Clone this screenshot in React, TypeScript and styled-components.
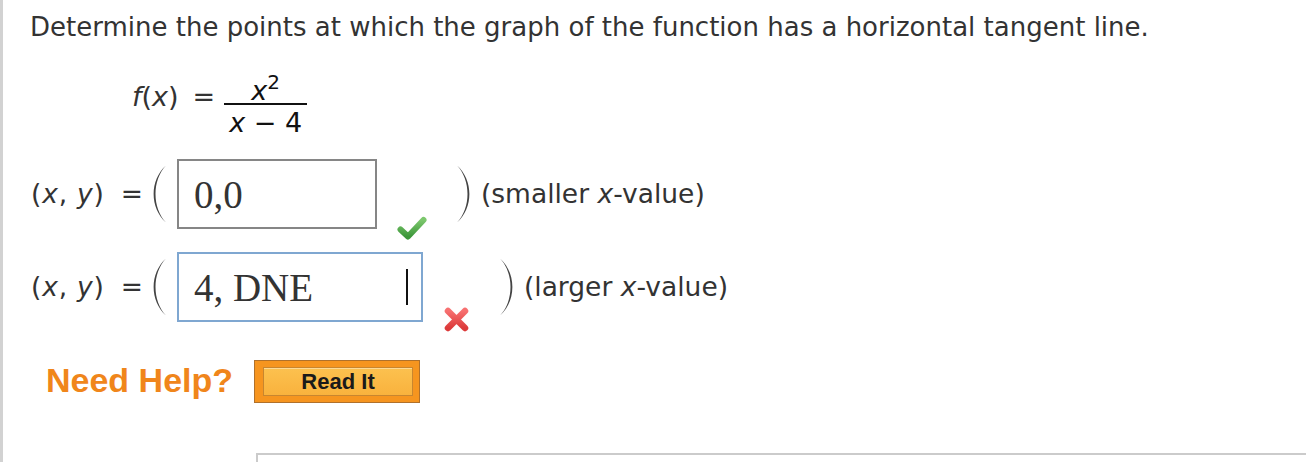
import React from 'react';
import styled, { createGlobalStyle } from 'styled-components';

const GlobalStyle = createGlobalStyle`
  html, body {
    margin: 0;
    padding: 0;
    background: #fff;
  }
  body {
    font-family: 'DejaVu Sans', Verdana, sans-serif;
    color: #333;
  }
`;

const Page = styled.div`
  min-height: 462px;
  box-sizing: border-box;
  border-left: 3px solid #d2d2d2;
  padding: 12px 0 0 27px;
  display: flex;
  flex-direction: column;
  overflow: hidden;
`;

const Prompt = styled.p`
  margin: 0;
  font-size: 26px;
  line-height: 30px;
  color: #333;
`;

const FunctionRow = styled.div`
  display: flex;
  align-items: flex-start;
  margin-top: 36px;
  padding-left: 102px;
  font-size: 27px;
  color: #333;
`;

const FuncName = styled.span`
  line-height: 30px;
  margin-top: 4px;
`;

const Equals = styled.span<{ $left: number; $right: number }>`
  margin: 0 ${p => p.$right}px 0 ${p => p.$left}px;
  line-height: 30px;
`;

const Fraction = styled.span`
  display: inline-flex;
  flex-direction: column;
  align-items: center;
  color: #111;
`;

const Numerator = styled.span`
  line-height: 25px;
  padding: 0 6px;
`;

const Sup = styled.sup`
  font-size: 20px;
  line-height: 0;
  vertical-align: 11px;
`;

const Bar = styled.span`
  align-self: stretch;
  height: 2px;
  background: #111;
`;

const Denominator = styled.span`
  line-height: 36px;
  padding: 0 5px;
`;

const AnswerRow = styled.div<{ $top: number }>`
  display: flex;
  align-items: center;
  margin-top: ${p => p.$top}px;
  font-size: 26.5px;
  color: #333;
`;

const PointLabel = styled.span`
  padding-left: 1px;
  line-height: 30px;
  letter-spacing: 0.8px;
`;

const Field = styled.div<{ $width: number; $focused?: boolean }>`
  box-sizing: border-box;
  width: ${p => p.$width}px;
  height: 70px;
  margin-left: 11px;
  display: flex;
  align-items: center;
  padding: 0 15px;
  border: 2px solid ${p => (p.$focused ? '#7fa7d1' : '#868686')};
  background: #fff;
  font-family: 'Liberation Serif', 'Times New Roman', serif;
  font-size: 39px;
  color: #333;
`;

const Caret = styled.span`
  margin-left: auto;
  margin-right: -2px;
  width: 2px;
  height: 36px;
  background: #111;
`;

const Status = styled.span`
  display: flex;
  align-self: flex-end;
  margin: 0 30px -11px 20px;
`;

const Hint = styled.span`
  margin-left: 10px;
  line-height: 30px;
`;

const HelpRow = styled.div`
  display: flex;
  align-items: center;
  gap: 21px;
  margin-top: 38px;
  padding-left: 16px;
`;

const HelpLabel = styled.span`
  margin-bottom: 3px;
  font-family: 'Liberation Sans', Arial, sans-serif;
  font-weight: bold;
  font-size: 34px;
  line-height: 38px;
  color: #f0861b;
`;

const ReadItButton = styled.button`
  box-sizing: border-box;
  width: 166px;
  height: 43px;
  padding: 6px 6px 6px 8px;
  border: 1px solid #b0712b;
  background: #f6951f;
  display: flex;
  cursor: pointer;
`;

const ReadItFace = styled.span`
  flex: 1;
  display: flex;
  align-items: center;
  justify-content: center;
  border: 1px solid #c8862f;
  background: linear-gradient(#fcc14f, #f9b23d);
  box-shadow: inset 0 1px 0 rgba(255, 255, 255, 0.4);
  font: bold 22px 'Liberation Sans', Arial, sans-serif;
  color: #1a1a1a;
`;

const NextPanel = styled.div`
  flex: 1;
  margin: 50px 0 0 226px;
  border-top: 2px solid #cbcbcb;
  border-left: 2px solid #cbcbcb;
`;

function Paren({ side, gap }: { side: 'left' | 'right'; gap: number }) {
  const d =
    side === 'left'
      ? 'M14 0.5 C-2.5 15 -2.5 43 14 57.5 C0 43 0 15 14 0.5 Z'
      : 'M0 0.5 C16.5 15 16.5 43 0 57.5 C14 43 14 15 0 0.5 Z';
  return (
    <svg width="14" height="58" viewBox="0 0 14 58" style={{ marginLeft: gap, flexShrink: 0 }}>
      <path d={d} fill="#444" />
    </svg>
  );
}

function CheckIcon() {
  return (
    <svg width="30" height="24" viewBox="0 0 30 24">
      <defs>
        <linearGradient id="okGrad" x1="0" y1="0" x2="0" y2="1">
          <stop offset="0" stopColor="#7cc76d" />
          <stop offset="1" stopColor="#3d973a" />
        </linearGradient>
      </defs>
      <path
        d="M3.5 13.5 L11 20.5 L26.5 4"
        fill="none"
        stroke="url(#okGrad)"
        strokeWidth="6"
        strokeLinecap="round"
        strokeLinejoin="round"
      />
    </svg>
  );
}

function CrossIcon() {
  return (
    <svg width="27" height="27" viewBox="0 0 27 27">
      <defs>
        <linearGradient id="badGrad" x1="0" y1="0" x2="0" y2="1">
          <stop offset="0" stopColor="#f77070" />
          <stop offset="1" stopColor="#dc3a3a" />
        </linearGradient>
      </defs>
      <path
        d="M5 5 L22 22 M22 5 L5 22"
        fill="none"
        stroke="url(#badGrad)"
        strokeWidth="6.5"
        strokeLinecap="round"
      />
    </svg>
  );
}

type Answer = {
  value: string;
  width: number;
  correct: boolean;
  focused?: boolean;
  hint: string;
};

const answers: Answer[] = [
  { value: '0,0', width: 200, correct: true, hint: 'smaller' },
  { value: '4, DNE', width: 246, correct: false, focused: true, hint: 'larger' },
];

export default function App() {
  return (
    <>
      <GlobalStyle />
      <Page>
        <Prompt>Determine the points at which the graph of the function has a horizontal tangent line.</Prompt>

        <FunctionRow>
          <FuncName>
            <i>f</i>(<i>x</i>)
          </FuncName>
          <Equals $left={14} $right={9} style={{ marginTop: 4 }}>=</Equals>
          <Fraction>
            <Numerator>
              <i>x</i>
              <Sup>2</Sup>
            </Numerator>
            <Bar />
            <Denominator>
              <i>x</i> − 4
            </Denominator>
          </Fraction>
        </FunctionRow>

        {answers.map((a, i) => (
          <AnswerRow key={a.hint} $top={i === 0 ? 18 : 23}>
            <PointLabel>
              (<i>x</i>, <i>y</i>)
            </PointLabel>
            <Equals $left={16} $right={0}>=</Equals>
            <Paren side="left" gap={9} />
            <Field $width={a.width} $focused={a.focused}>
              {a.value}
              {a.focused && <Caret />}
            </Field>
            <Status>{a.correct ? <CheckIcon /> : <CrossIcon />}</Status>
            <Paren side="right" gap={0} />
            <Hint>
              ({a.hint} <i>x</i>-value)
            </Hint>
          </AnswerRow>
        ))}

        <HelpRow>
          <HelpLabel>Need Help?</HelpLabel>
          <ReadItButton type="button">
            <ReadItFace>Read It</ReadItFace>
          </ReadItButton>
        </HelpRow>

        <NextPanel />
      </Page>
    </>
  );
}
